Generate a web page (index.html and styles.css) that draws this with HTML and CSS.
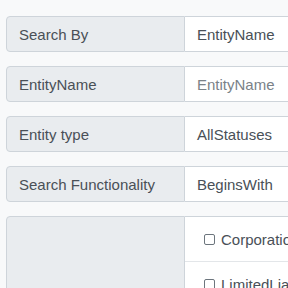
FILE: index.html
```html
<!DOCTYPE html>
<html>
  <head>
    <title>Search</title>
    <meta name="viewport" content="width=device-width, initial-scale=1.0" />
    <link rel="stylesheet" href="styles.css">
  </head>
  <body>
    <div class="form">
      <div class="group">
        <span class="label">Search By</span>
        <span class="field">EntityName</span>
      </div>
      <div class="group">
        <span class="label">EntityName</span>
        <span class="field placeholder">EntityName</span>
      </div>
      <div class="group">
        <span class="label">Entity type</span>
        <span class="field">AllStatuses</span>
      </div>
      <div class="group">
        <span class="label">Search Functionality</span>
        <span class="field">BeginsWith</span>
      </div>
      <div class="group tall">
        <span class="label"></span>
        <ul class="checks">
          <li><span class="box"></span>Corporation</li>
          <li><span class="box"></span>LimitedLiabilityCompany</li>
        </ul>
      </div>
    </div>
  </body>
</html>
```

FILE: styles.css
```css
body {
  margin: 0;
  background-color: #f8f9fa;
  font-family: "Liberation Sans", Arial, sans-serif;
  font-size: 15px;
  color: #495057;
  overflow: hidden;
}

.form {
  padding: 16px 0 0 6px;
  width: 400px;
}

.group {
  display: flex;
  height: 36px;
  margin-bottom: 14px;
}

.label {
  width: 165px;
  flex-shrink: 0;
  display: flex;
  align-items: center;
  padding-left: 12px;
  background-color: #e9ecef;
  border: 1px solid #ced4da;
  border-radius: 4px 0 0 4px;
  white-space: nowrap;
}

.field {
  flex: 1;
  display: flex;
  align-items: center;
  padding-left: 12px;
  background-color: #fff;
  border: 1px solid #ced4da;
  border-left: none;
}

.placeholder {
  color: #7a8288;
}

.tall {
  height: auto;
}

.tall .label {
  height: 120px;
}

.checks {
  flex: 1;
  list-style: none;
  margin: 0;
  padding: 0;
  background-color: #fff;
  border: 1px solid #ced4da;
  border-left: none;
}

.checks li {
  display: flex;
  align-items: center;
  height: 44px;
  padding-left: 19px;
  border-bottom: 1px solid #e3e6e9;
  white-space: nowrap;
}

.box {
  width: 9px;
  height: 9px;
  border: 1px solid #6c757d;
  border-radius: 2px;
  margin-right: 6px;
  background-color: #fff;
}
```
